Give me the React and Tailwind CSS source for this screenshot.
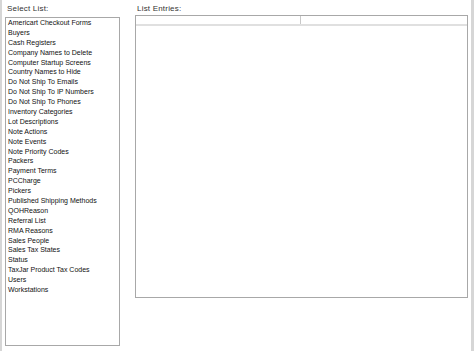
import React from "react";

const lists = [
  "Americart Checkout Forms",
  "Buyers",
  "Cash Registers",
  "Company Names to Delete",
  "Computer Startup Screens",
  "Country Names to Hide",
  "Do Not Ship To Emails",
  "Do Not Ship To IP Numbers",
  "Do Not Ship To Phones",
  "Inventory Categories",
  "Lot Descriptions",
  "Note Actions",
  "Note Events",
  "Note Priority Codes",
  "Packers",
  "Payment Terms",
  "PCCharge",
  "Pickers",
  "Published Shipping Methods",
  "QOHReason",
  "Referral List",
  "RMA Reasons",
  "Sales People",
  "Sales Tax States",
  "Status",
  "TaxJar Product Tax Codes",
  "Users",
  "Workstations",
];

const ListSetup = () => {
  return (
    <div
      className="flex h-[351px] w-[474px] bg-white text-[#111] border-l-2 border-r-[3px] border-[#d6d6d6]"
      style={{ fontFamily: '"Liberation Sans", Arial, sans-serif' }}
    >
      {/* select list */}
      <div className="ml-[3px] flex w-[115px] flex-col pt-[4px]">
        <div className="ml-[2px] h-[13px] text-[8px] leading-[10px] tracking-[0.2px] text-[#333]">Select List:</div>
        <div className="h-[329px] border border-[#a8a8a8] bg-white px-[2px]">
          {lists.map((item, index) => (
            <div key={index} className="h-[9.9px] text-[7px] leading-[10px] whitespace-nowrap">
              {item}
            </div>
          ))}
        </div>
      </div>

      {/* list entries */}
      <div className="ml-[15px] flex w-[333px] flex-col pt-[4px]">
        <div className="ml-[2px] h-[11px] text-[8px] leading-[10px] tracking-[0.2px] text-[#333]">List Entries:</div>
        <div className="h-[283px] border border-[#a8a8a8] bg-white">
          <div className="flex h-[10px] border-b-2 border-[#e0e0e0]">
            <div className="w-[165px] border-r border-[#c8c8c8]"></div>
            <div className="flex-1"></div>
          </div>
        </div>
      </div>
    </div>
  );
};

export default function App() {
  return <ListSetup />;
}
